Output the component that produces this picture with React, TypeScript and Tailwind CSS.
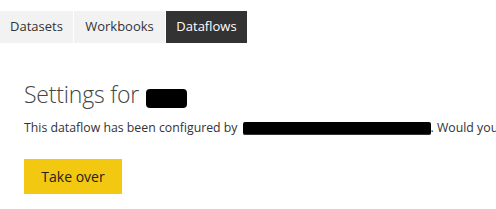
import React from 'react'

const tabs = [
  { label: 'Datasets', w: 'w-[73px]' },
  { label: 'Workbooks', w: 'w-[91px]' },
  { label: 'Dataflows', w: 'w-[81px]' },
]

export default function App() {
  return (
    <div className="w-[496px] h-[209px] bg-white overflow-hidden" style={{ fontFamily: '"Open Sans", "Liberation Sans", sans-serif' }}>
      <div className="flex gap-[1px] pt-[11px]">
        {tabs.map((t, i) => (
          <div
            key={t.label}
            className={
              i === 2
                ? `${t.w} h-[32px] flex items-center justify-center text-[13px] bg-[#333333] text-white`
                : `${t.w} h-[32px] flex items-center justify-center text-[13px] bg-[#f2f2f2] text-[#333333]`
            }
          >
            {t.label}
          </div>
        ))}
      </div>
      <div className="pl-[24px] pt-[36px]">
        <h1 className="flex items-center text-[23px] font-light text-[#444] leading-[30px] tracking-[-0.2px]">
          Settings for
          <span className="ml-[7px] mt-[9px] inline-block w-[41px] h-[19px] bg-black rounded-[4px]" />
        </h1>
        <p className="mt-[10px] flex items-center text-[12.3px] text-[#333] whitespace-nowrap leading-[18px]">
          <span className="shrink-0">This dataflow has been configured by</span>
          <span className="shrink-0 ml-[5px] inline-block w-[188px] h-[13px] bg-black border-b border-[#333] rounded-[2px]" />
          <span className="shrink-0">. Would you like to take over?</span>
        </p>
        <button className="mt-[22px] w-[98px] h-[35px] bg-[#f2c811] text-[14px] text-[#222]">Take over</button>
      </div>
    </div>
  )
}
